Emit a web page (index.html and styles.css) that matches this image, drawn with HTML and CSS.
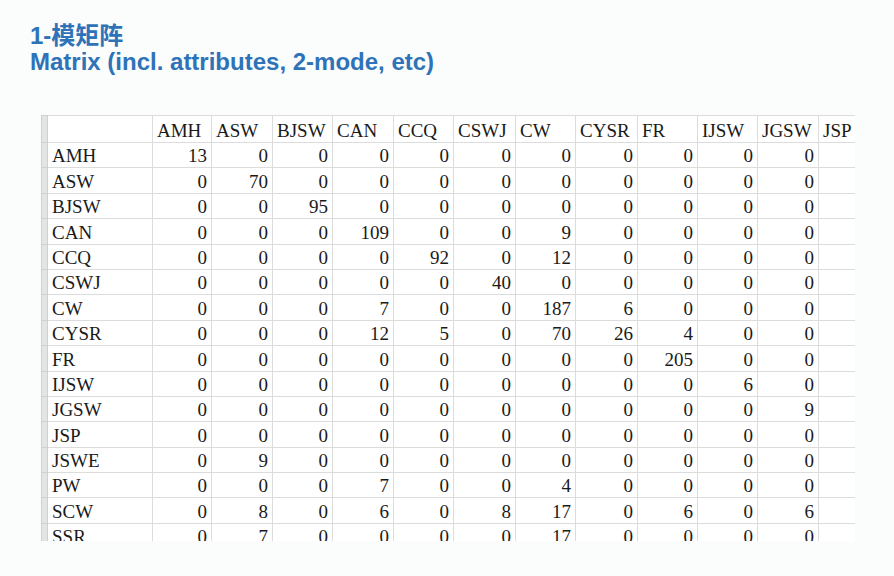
FILE: index.html
```html
<!DOCTYPE html>
<html>
<head>
<meta charset="utf-8">
<link rel="stylesheet" href="styles.css">
</head>
<body>
<div class="slide">
  <div class="title">
    <div class="t1">1-模矩阵</div>
    <div class="t2">Matrix (incl. attributes, 2-mode, etc)</div>
  </div>
  <div class="sheet">
    <table class="grid">
      <colgroup>
        <col class="c-strip"><col class="c-label">
        <col class="c59"><col class="c61"><col class="c60"><col class="c61"><col class="c60"><col class="c62"><col class="c60"><col class="c62"><col class="c60"><col class="c60"><col class="c61"><col class="c80">
      </colgroup>
      <thead>
        <tr class="hdr"><td class="strip"></td><td></td><td>AMH</td><td>ASW</td><td>BJSW</td><td>CAN</td><td>CCQ</td><td>CSWJ</td><td>CW</td><td>CYSR</td><td>FR</td><td>IJSW</td><td>JGSW</td><td>JSP</td></tr>
      </thead>
      <tbody id="body"></tbody>
    </table>
  </div>
</div>
<script>
var rows = [
["AMH",13,0,0,0,0,0,0,0,0,0,0],
["ASW",0,70,0,0,0,0,0,0,0,0,0],
["BJSW",0,0,95,0,0,0,0,0,0,0,0],
["CAN",0,0,0,109,0,0,9,0,0,0,0],
["CCQ",0,0,0,0,92,0,12,0,0,0,0],
["CSWJ",0,0,0,0,0,40,0,0,0,0,0],
["CW",0,0,0,7,0,0,187,6,0,0,0],
["CYSR",0,0,0,12,5,0,70,26,4,0,0],
["FR",0,0,0,0,0,0,0,0,205,0,0],
["IJSW",0,0,0,0,0,0,0,0,0,6,0],
["JGSW",0,0,0,0,0,0,0,0,0,0,9],
["JSP",0,0,0,0,0,0,0,0,0,0,0],
["JSWE",0,9,0,0,0,0,0,0,0,0,0],
["PW",0,0,0,7,0,0,4,0,0,0,0],
["SCW",0,8,0,6,0,8,17,0,6,0,6],
["SSR",0,7,0,0,0,0,17,0,0,0,0]
];
var tb = document.getElementById("body");
rows.forEach(function(r){
  var tr = document.createElement("tr");
  var s = document.createElement("td"); s.className = "strip"; tr.appendChild(s);
  var l = document.createElement("td"); l.textContent = r[0]; tr.appendChild(l);
  for (var i = 1; i < r.length; i++) {
    var td = document.createElement("td");
    td.className = "num";
    td.textContent = r[i];
    tr.appendChild(td);
  }
  tr.appendChild(document.createElement("td"));
  tb.appendChild(tr);
});
</script>
</body>
</html>
```
FILE: styles.css
```css
html, body {
  margin: 0;
  padding: 0;
  background: #fbfcfc;
}
.slide {
  width: 894px;
  height: 576px;
  overflow: hidden;
}
.title {
  padding: 23px 0 0 30px;
  font-family: "Liberation Sans", "Noto Sans CJK SC", Arial, sans-serif;
  font-weight: bold;
  font-size: 24px;
  line-height: 26px;
  color: #2e73b8;
}
.sheet {
  margin: 40px 0 0 41px;
  width: 814px;
  height: 426px;
  overflow: hidden;
  background: #fff;
}
.grid {
  width: 857px;
  border-collapse: collapse;
  table-layout: fixed;
  font-family: "Liberation Serif", "Times New Roman", serif;
  font-size: 19px;
  color: #1a1a1a;
}
.grid td {
  border: 1px solid #dcdcdc;
  padding: 0 4px 1px 4px;
  height: 23.4px;
  line-height: 20px;
  white-space: nowrap;
  overflow: hidden;
  vertical-align: bottom;
}
.grid .hdr td {
  height: 25px;
}
.grid td.strip {
  background: #e4e4e4;
  border-color: #d0d0d0;
  padding: 0;
}
.grid td.num {
  text-align: right;
}
.c-strip { width: 6px; }
.c-label { width: 105px; }
.c59 { width: 59px; }
.c60 { width: 60px; }
.c61 { width: 61px; }
.c62 { width: 62px; }
.c80 { width: 80px; }
```
